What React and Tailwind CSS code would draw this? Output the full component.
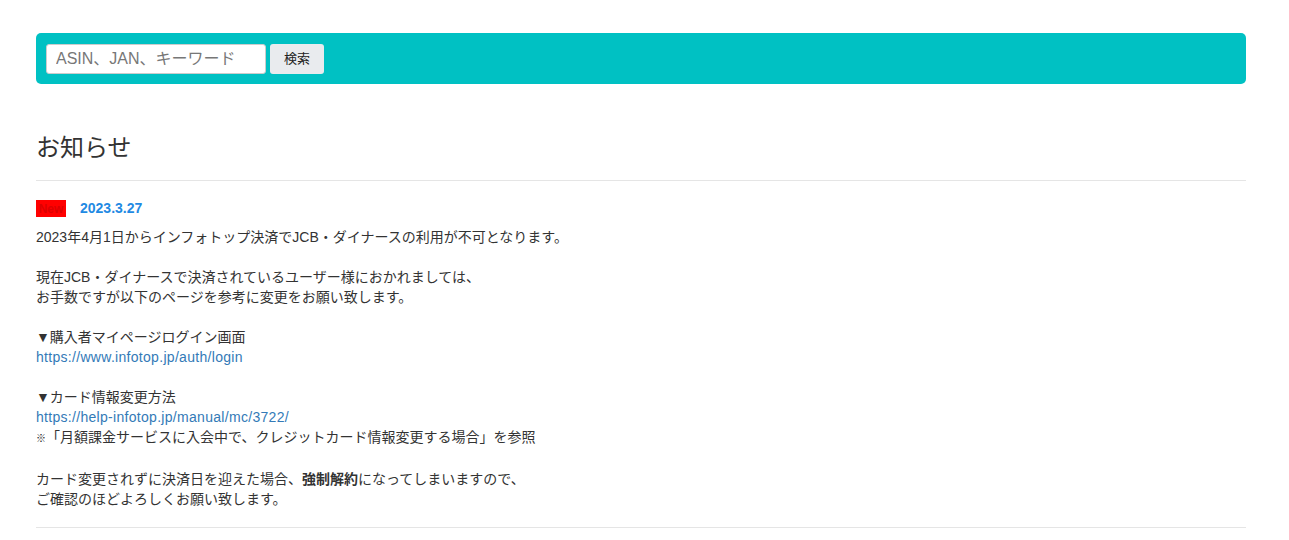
export default function App() {
    const font = { fontFamily: '"Liberation Sans", "Noto Sans CJK JP", sans-serif' };

    return (
        <div className="min-h-[540px] bg-white text-[14px] text-[#333]" style={font}>
            <div className="ml-[36px] w-[1210px] pt-[33px]">
                {/* Search bar */}
                <div className="flex h-[51px] items-center gap-[4px] rounded-[5px] bg-[#00c1c3] px-[10px]">
                    <input
                        type="text"
                        placeholder="ASIN、JAN、キーワード"
                        className="h-[30px] w-[220px] rounded-[3px] border border-[#ccc] bg-white px-[9px] text-[16px] text-[#333] placeholder-[#777] outline-none"
                    />
                    <button className="mt-[1px] h-[30px] w-[54px] rounded-[3px] bg-[#e9ebee] text-[13px] text-[#222]">
                        検索
                    </button>
                </div>

                {/* Notice */}
                <h2 className="mt-[48px] text-[24px] leading-[32px] text-[#333]">お知らせ</h2>
                <div className="mt-[16px] border-t border-[#e5e5e5]" />

                <div className="pt-[17px]">
                    <div className="flex items-center gap-[14px]">
                        <span className="inline-flex h-[17px] w-[30px] items-center justify-center bg-[#ff0000] text-[12px] font-bold text-[#dd0000]">
                            New
                        </span>
                        <span className="text-[14px] font-bold text-[#1f8ae3]">2023.3.27</span>
                    </div>

                    <div className="mt-[8px] leading-[20px]">
                        <p>2023年4月1日からインフォトップ決済でJCB・ダイナースの利用が不可となります。</p>
                        <br />
                        <p>現在JCB・ダイナースで決済されているユーザー様におかれましては、</p>
                        <p>お手数ですが以下のページを参考に変更をお願い致します。</p>
                        <br />
                        <p>▼購入者マイページログイン画面</p>
                        <a href="#" className="block tracking-[0.3px] text-[#337ab7]">https://www.infotop.jp/auth/login</a>
                        <br />
                        <p>▼カード情報変更方法</p>
                        <a href="#" className="block tracking-[0.3px] text-[#337ab7]">https://help-infotop.jp/manual/mc/3722/</a>
                        <p>
                            <span className="text-[10px] text-[#222]">※</span>「月額課金サービスに入会中で、クレジットカード情報変更する場合」を参照
                        </p>
                        <br />
                        <p>
                            カード変更されずに決済日を迎えた場合、<strong>強制解約</strong>になってしまいますので、
                        </p>
                        <p>ご確認のほどよろしくお願い致します。</p>
                    </div>
                    <div className="mt-[18px] border-t border-[#e5e5e5]" />
                </div>
            </div>
        </div>
    );
}
